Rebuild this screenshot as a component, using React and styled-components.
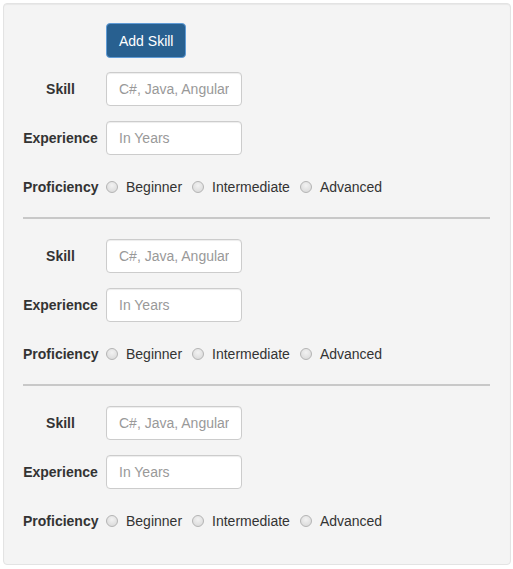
import React from 'react';
import styled, { createGlobalStyle } from 'styled-components';

const GlobalStyle = createGlobalStyle`
    body {
        margin: 0;
        font-family: "Liberation Sans", Arial, sans-serif;
        font-size: 14px;
        color: #333;
        background: #fff;
    }
`

const levels = ['Beginner', 'Intermediate', 'Advanced'];

const SkillBlock = ({ index }) => {
    return (
        <>
            <Row>
                <Label>Skill</Label>
                <Input placeholder="C#, Java, Angular" />
            </Row>
            <Row>
                <Label>Experience</Label>
                <Input placeholder="In Years" />
            </Row>
            <Row>
                <Label>Proficiency</Label>
                <Radios>
                    {levels.map(level => (
                        <RadioLabel key={level}>
                            <Radio type="radio" name={`proficiency-${index}`} />
                            {level}
                        </RadioLabel>
                    ))}
                </Radios>
            </Row>
        </>
    );
}

const App = () => {
    return (
        <>
            <GlobalStyle />
            <Well>
                <Row>
                    <Label />
                    <Button>Add Skill</Button>
                </Row>
                {[0, 1, 2].map(i => (
                    <React.Fragment key={i}>
                        {i > 0 && <Divider />}
                        <SkillBlock index={i} />
                    </React.Fragment>
                ))}
            </Well>
        </>
    );
}

const Well = styled.div`
    margin: 3px;
    width: 508px;
    box-sizing: border-box;
    padding: 19px 20px 26px 19px;
    background: #f4f4f4;
    border: 1px solid #e3e3e3;
    border-radius: 4px;
    box-shadow: inset 0 1px 1px rgba(0, 0, 0, 0.05);
    display: flex;
    flex-direction: column;
    gap: 15px;
`

const Row = styled.div`
    display: grid;
    grid-template-columns: 75px auto;
    column-gap: 8px;
    align-items: center;
    height: 34px;
`

const Label = styled.label`
    font-weight: bold;
    text-align: center;
`

const Button = styled.button`
    justify-self: start;
    height: 35px;
    padding: 0 12px;
    font-family: inherit;
    font-size: 14px;
    color: #fff;
    background: #286090;
    border: 1px solid #5f9bd6;
    border-radius: 4px;
    cursor: pointer;
`

const Input = styled.input`
    width: 136px;
    height: 34px;
    box-sizing: border-box;
    padding: 6px 12px;
    font-family: inherit;
    font-size: 14px;
    color: #555;
    background: #fff;
    border: 1px solid #ccc;
    border-radius: 4px;
    box-shadow: inset 0 1px 1px rgba(0, 0, 0, 0.075);
    &::placeholder {
        color: #999;
    }
`

const Radios = styled.div`
    display: flex;
    align-items: center;
    gap: 10px;
`

const RadioLabel = styled.label`
    display: flex;
    align-items: center;
    gap: 8px;
`

const Radio = styled.input`
    appearance: none;
    margin: 0;
    width: 12px;
    height: 12px;
    border-radius: 50%;
    border: 1px solid #b4b4b4;
    background: radial-gradient(circle at 50% 35%, #f2f2f2, #d6d6d6);
`

const Divider = styled.hr`
    margin: -2px 0 5px;
    border: 0;
    border-top: 2px solid #c8c8c8;
`

export default App;
